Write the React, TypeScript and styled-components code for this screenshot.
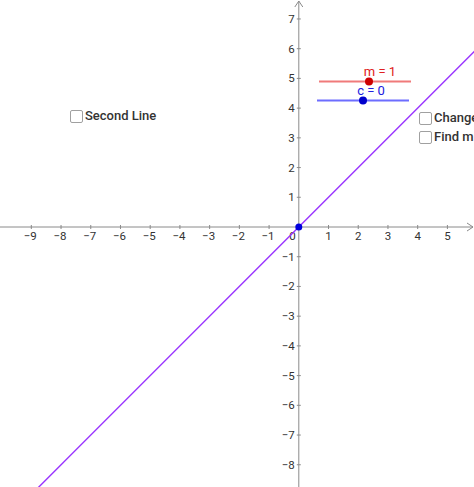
import React from "react";
import styled, { createGlobalStyle } from "styled-components";

const Global = createGlobalStyle`
  html, body { margin: 0; padding: 0; background: #fff; }
  body { font-family: Roboto, "Liberation Sans", sans-serif; }
`

const Canvas = styled.div`
  position: relative;
  width: 474px;
  height: 487px;
  overflow: hidden;
  background: #ffffff;
`

const Graph = styled.svg`
  display: block;
  width: 474px;
  height: 487px;
  font-family: Roboto, "Liberation Sans", sans-serif;
`

const CheckRow = styled.label<{ x: number; y: number }>`
  position: absolute;
  left: ${p => p.x}px;
  top: ${p => p.y}px;
  display: flex;
  align-items: center;
  gap: 2px;
  white-space: nowrap;
  font-size: 13px;
  font-weight: 500;
  color: #333333;
  line-height: 14px;
`

const Box = styled.span`
  display: block;
  width: 11px;
  height: 11px;
  border: 1px solid #a0a0a0;
  border-radius: 2px;
  background: #fff;
`

// graph coordinates
const OX = 298.8
const OY = 227
const U = 29.72

const px = (x: number) => OX + x * U
const py = (y: number) => OY - y * U

const xs = [-9, -8, -7, -6, -5, -4, -3, -2, -1, 1, 2, 3, 4, 5]
const ys = [7, 6, 5, 4, 3, 2, 1, -1, -2, -3, -4, -5, -6, -7, -8]

const lbl = (n: number) => (n < 0 ? "\u2212" + Math.abs(n) : String(n))

function Axes() {
    return (
        <g stroke="#8a8a8a" strokeWidth={1} fill="none">
            <line x1={0} y1={OY} x2={473} y2={OY}/>
            <polyline points={`467,${OY - 4} 473,${OY} 467,${OY + 4}`}/>
            <line x1={OX} y1={1} x2={OX} y2={487}/>
            <polyline points={`${OX - 4},7 ${OX},1 ${OX + 4},7`}/>
            {xs.map(n => (
                <line key={"tx" + n} x1={px(n)} y1={OY - 2} x2={px(n)} y2={OY + 2}/>
            ))}
            {ys.map(n => (
                <line key={"ty" + n} x1={OX - 2} y1={py(n)} x2={OX + 2} y2={py(n)}/>
            ))}
        </g>
    )
}

function AxisLabels() {
    return (
        <g fill="#333333" fontSize={11.5}>
            {xs.map(n => (
                <text key={"lx" + n} x={px(n) + (n < 0 ? -1 : 0)} y={OY + 13} textAnchor="middle">{lbl(n)}</text>
            ))}
            {ys.map(n => (
                <text key={"ly" + n} x={OX - 4} y={py(n) + 4} textAnchor="end">{lbl(n)}</text>
            ))}
            <text x={OX - 3} y={OY + 13} textAnchor="end">0</text>
        </g>
    )
}

function Slider(props: { x1: number; x2: number; y: number; at: number; line: string; dot: string; text: string; tx: number; color: string }) {
    return (
        <g>
            <line x1={props.x1} y1={props.y} x2={props.x2} y2={props.y} stroke={props.line} strokeWidth={2}/>
            <circle cx={props.at} cy={props.y} r={4} fill={props.dot}/>
            <text x={props.tx} y={props.y - 6} fill={props.color} fontSize={13} textAnchor="middle">{props.text}</text>
        </g>
    )
}

export default function App() {
    return (
        <>
            <Global/>
            <Canvas>
                <Graph viewBox="0 0 474 487">
                    <Axes/>
                    <AxisLabels/>
                    {/* y = m x + c */}
                    <line x1={px(-9)} y1={py(-9)} x2={px(6)} y2={py(6)} stroke="#9933ff" strokeWidth={1.4}/>
                    <circle cx={OX} cy={OY} r={3.5} fill="#0000dd"/>
                    <Slider x1={319} x2={411} y={81.5} at={369} line="#f07a7a" dot="#cc0000" text="m = 1" tx={380} color="#e02020"/>
                    <Slider x1={317} x2={409} y={100.5} at={363} line="#6d6dff" dot="#0000cc" text="c = 0" tx={371} color="#2020e0"/>
                </Graph>
                <CheckRow x={70} y={109}><Box/>Second Line</CheckRow>
                <CheckRow x={419} y={111}><Box/>Change</CheckRow>
                <CheckRow x={419} y={130}><Box/>Find m</CheckRow>
            </Canvas>
        </>
    )
}
